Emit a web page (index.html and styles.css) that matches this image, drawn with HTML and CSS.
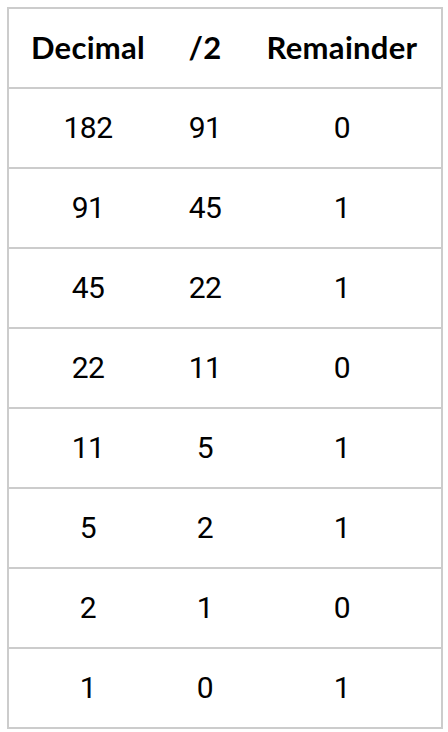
FILE: index.html
```html
<!DOCTYPE html>
<html>
<head>
<meta charset="utf-8">
<link rel="stylesheet" href="styles.css">
</head>
<body>
<table class="conv">
  <colgroup>
    <col class="c-dec">
    <col class="c-div">
    <col class="c-rem">
  </colgroup>
  <thead>
    <tr><th>Decimal</th><th>/2</th><th>Remainder</th></tr>
  </thead>
  <tbody>
    <tr><td>182</td><td>91</td><td>0</td></tr>
    <tr><td>91</td><td>45</td><td>1</td></tr>
    <tr><td>45</td><td>22</td><td>1</td></tr>
    <tr><td>22</td><td>11</td><td>0</td></tr>
    <tr><td>11</td><td>5</td><td>1</td></tr>
    <tr><td>5</td><td>2</td><td>1</td></tr>
    <tr><td>2</td><td>1</td><td>0</td></tr>
    <tr><td>1</td><td>0</td><td>1</td></tr>
  </tbody>
</table>
</body>
</html>
```
FILE: styles.css
```css
html, body {
  margin: 0;
  padding: 0;
  background: #ffffff;
}
body {
  padding: 7px;
  font-family: Lato, "Open Sans", sans-serif;
  color: #000000;
}
.conv {
  border-collapse: separate;
  border-spacing: 0;
  border: 2px solid #cccccc;
  width: 436px;
  table-layout: fixed;
}
.c-dec { width: 158px; }
.c-div { width: 76px; }
.c-rem { width: 198px; }
.conv th,
.conv td {
  height: 78px;
  padding: 0;
  text-align: center;
  vertical-align: middle;
  line-height: 1;
}
.conv th {
  font-size: 31px;
  font-weight: 700;
  letter-spacing: 0.3px;
  padding-bottom: 2px;
  height: 76px;
}
.conv td {
  font-family: Roboto, Lato, sans-serif;
  font-size: 30px;
  font-weight: 400;
  letter-spacing: -0.6px;
  border-top: 2px solid #cccccc;
}
```
